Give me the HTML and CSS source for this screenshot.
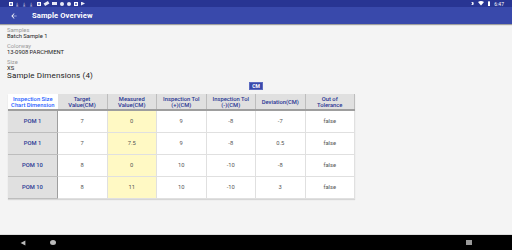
FILE: index.html
```html
<!DOCTYPE html>
<html>
<head>
<meta charset="utf-8">
<link rel="stylesheet" href="styles.css">
</head>
<body>
<div class="screen">
  <div class="statusbar">
    <div class="sb-left">
      <span class="ic sq"></span><span class="ic dl">⤓</span><span class="ic dl">⤓</span><span class="ic dl">⤓</span><span class="ic sq"></span><span class="ic wr"></span><span class="ic sq2"></span><span class="ic ci"></span><span class="ic ci"></span><span class="ic sq"></span><span class="ic pl"></span>
    </div>
    <div class="sb-right">
      <svg width="5" height="5" viewBox="0 0 10 10"><path d="M3 2 L7 6 L5 8 V2 L7 4 L3 8" stroke="#fff" stroke-width="1.5" fill="none"/></svg>
      <svg width="6" height="5" viewBox="0 0 12 10"><path d="M0 2 Q6 -2 12 2 L6 9 Z" fill="#fff"/></svg>
      <svg width="4" height="5" viewBox="0 0 6 10"><rect x="1" y="1" width="4" height="9" fill="#fff"/><rect x="2" y="0" width="2" height="1" fill="#fff"/></svg>
      <span class="time">6:47</span>
    </div>
  </div>
  <div class="appbar">
    <svg class="back" width="8" height="8" viewBox="0 0 24 24"><path d="M20 11H7.83l5.59-5.59L12 4l-8 8 8 8 1.41-1.41L7.83 13H20v-2z" fill="#fff"/></svg>
    <span class="title">Sample Overview</span>
  </div>
  <div class="content">
    <div class="field"><div class="label">Samples</div><div class="value">Batch Sample 1</div></div>
    <div class="field"><div class="label">Colorway</div><div class="value">13-0908 PARCHMENT</div></div>
    <div class="field"><div class="label">Size</div><div class="value">XS</div></div>
    <div class="section">Sample Dimensions (4)</div>
    <div class="unit-row"><span class="unit">CM</span></div>
    <table class="dims">
      <thead>
        <tr>
          <th class="first">Inspection Size<br>Chart Dimension</th>
          <th>Target<br>Value(CM)</th>
          <th>Measured<br>Value(CM)</th>
          <th>Inspection Tol<br>(+)(CM)</th>
          <th>Inspection Tol<br>(-)(CM)</th>
          <th>Deviation(CM)</th>
          <th>Out of<br>Tolerance</th>
        </tr>
      </thead>
      <tbody>
        <tr><td class="pom">POM 1</td><td>7</td><td class="meas">0</td><td>9</td><td>-8</td><td>-7</td><td>false</td></tr>
        <tr><td class="pom">POM 1</td><td>7</td><td class="meas">7.5</td><td>9</td><td>-8</td><td>0.5</td><td>false</td></tr>
        <tr><td class="pom">POM 10</td><td>8</td><td class="meas">0</td><td>10</td><td>-10</td><td>-8</td><td>false</td></tr>
        <tr><td class="pom">POM 10</td><td>8</td><td class="meas">11</td><td>10</td><td>-10</td><td>3</td><td>false</td></tr>
      </tbody>
    </table>
  </div>
  <div class="navbar">
    <svg width="6" height="6" viewBox="0 0 10 10"><path d="M9 1 V9 L1 5 Z" fill="#bbb"/></svg>
    <span class="home"></span>
    <span class="spacer"></span>
    <span class="recent"></span>
  </div>
</div>
</body>
</html>
```
FILE: styles.css
```css
* { box-sizing: border-box; }
html, body { margin: 0; padding: 0; }
body { font-family: Roboto, "Liberation Sans", sans-serif; background: #f4f4f4; }
.screen { width: 512px; height: 250px; display: flex; flex-direction: column; overflow: hidden; }
.statusbar { height: 7px; background: #283593; display: flex; justify-content: space-between; align-items: center; padding: 0 8px 0 9px; }
.sb-left { display: flex; gap: 3px; align-items: center; }
.ic { display: inline-block; width: 4px; height: 4px; background: #e8eaf6; }
.ic.dl { background: none; color: #fff; font-size: 5px; line-height: 4px; width: 4px; }
.ic.sq { border: 1px solid #fff; background: #7986cb; }
.ic.sq2 { width: 5px; height: 3px; }
.ic.ci { border-radius: 50%; }
.ic.wr { width: 5px; height: 3px; transform: rotate(-30deg); }
.ic.pl { clip-path: polygon(0 0, 100% 50%, 0 100%); }
.sb-right { display: flex; align-items: center; gap: 3px; }
.time { color: #fff; font-size: 5px; line-height: 6px; }
.appbar { height: 17px; background: #3949ab; display: flex; align-items: center; padding-left: 10px; box-shadow: 0 1px 1px rgba(0,0,0,0.35); position: relative; z-index: 1; }
.back { margin-right: 14px; }
.title { color: #fff; font-weight: bold; font-size: 7.6px; letter-spacing: 0.1px; }
.content { flex: 1; padding: 3px 7px 0 7px; }
.field { margin-bottom: 4px; }
.field:nth-child(3) { margin-bottom: 0; }
.label { color: #999; font-size: 5.8px; line-height: 6px; }
.value { color: #222; font-size: 5.8px; line-height: 6px; }
.section { color: #222; font-size: 8px; line-height: 9px; letter-spacing: 0.15px; }
.unit-row { display: flex; justify-content: center; margin-top: 2px; height: 8px; }
.unit { background: #3949ab; color: #fff; font-size: 5px; font-weight: bold; padding: 0 2px; line-height: 6px; height: 8px; border: 1px solid #5c6bc0; }
.dims { border-collapse: collapse; margin-top: 4px; margin-left: 1px; table-layout: fixed; width: 347px; box-shadow: 0 1px 1px rgba(0,0,0,0.12); }
.dims th { height: 16px; background: #e0e0e0; color: #283593; font-size: 5.8px; font-weight: 500; line-height: 6px; text-align: center; border-right: 1px solid #bdbdbd; border-bottom: 2px solid #9e9e9e; padding: 0; white-space: nowrap; }
.dims th.first { background: #fff; color: #2962ff; border-right: none; }
.dims td { height: 22px; background: #fff; color: #555; font-size: 5.8px; text-align: center; border-right: 1px solid #e0e0e0; border-bottom: 1px solid #e0e0e0; padding: 0; }
.dims td.pom { background: #e0e0e0; color: #283593; font-weight: 500; border-right: 1px solid #9e9e9e; border-bottom: 1px solid #bdbdbd; }
.dims td.meas { background: #fff9c4; }
.navbar { height: 16px; background: #000; display: flex; align-items: center; padding: 0 40px 0 20px; gap: 24px; border-top: 1px solid #ddd; }
.home { width: 6px; height: 5px; border-radius: 50%; background: #bbb; }
.spacer { flex: 1; }
.recent { width: 6px; height: 5px; background: #999; }
```
